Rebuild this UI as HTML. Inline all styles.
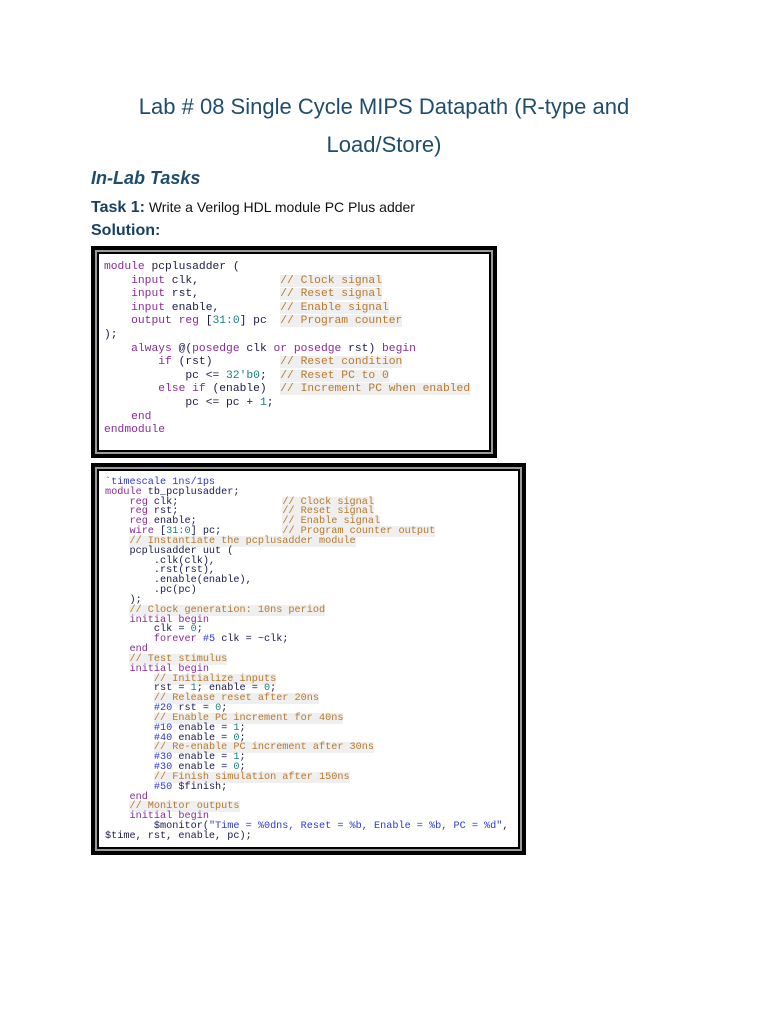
<!DOCTYPE html>
<html><head><meta charset="utf-8"><style>
body{margin:0;width:768px;height:1024px;background:#fff;position:relative;font-family:"Liberation Sans",sans-serif;overflow:hidden}
.t{position:absolute;white-space:nowrap}
.title{left:0;width:768px;text-align:center;font-size:22px;color:#1f4d6b}
.box{position:absolute;background:#000;}
.box .g{position:absolute;left:4px;top:4px;right:4px;bottom:4px;background:#9a9a9a}
.box .i{position:absolute;left:6px;top:6px;right:6px;bottom:6px;background:#000}
.box .w{position:absolute;left:8px;top:8px;right:8px;bottom:8px;background:#fff}
pre{position:absolute;margin:0;font-family:"Liberation Mono",monospace;color:#1a1a50}
.k{color:#8a2a9a}.c{color:#b8792c;background:#efefef}.n{color:#178080}.b{color:#2a3ad0}
</style></head><body>
<div class="t title" style="top:94px">Lab # 08 Single Cycle MIPS Datapath (R-type and</div>
<div class="t title" style="top:132px">Load/Store)</div>
<div class="t" style="left:91px;top:168px;font-size:18px;font-weight:bold;font-style:italic;color:#1f4d6b">In-Lab Tasks</div>
<div class="t" style="left:91px;top:199px;font-size:14px;color:#111"><b style="color:#173f5f;font-size:16px">Task 1:</b> Write a Verilog HDL module PC Plus adder</div>
<div class="t" style="left:91px;top:222px;font-size:16px;font-weight:bold;color:#173f5f">Solution:</div>

<div class="box" style="left:91px;top:246px;width:406px;height:212px"><div class="g"></div><div class="i"></div><div class="w"></div></div>
<pre style="left:104px;top:261px;font-size:11.3px;line-height:13.6px"><span class="k">module</span> pcplusadder (
    <span class="k">input</span> clk,            <span class="c">// Clock signal</span>
    <span class="k">input</span> rst,            <span class="c">// Reset signal</span>
    <span class="k">input</span> enable,         <span class="c">// Enable signal</span>
    <span class="k">output reg</span> [<span class="n">31:0</span>] pc  <span class="c">// Program counter</span>
);
    <span class="k">always</span> @(<span class="k">posedge</span> clk <span class="k">or posedge</span> rst) <span class="k">begin</span>
        <span class="k">if</span> (rst)          <span class="c">// Reset condition</span>
            pc &lt;= <span class="n">32'b0</span>;  <span class="c">// Reset PC to 0</span>
        <span class="k">else if</span> (enable)  <span class="c">// Increment PC when enabled</span>
            pc &lt;= pc + <span class="n">1</span>;
    <span class="k">end</span>
<span class="k">endmodule</span></pre>

<div class="box" style="left:91px;top:463px;width:435px;height:392px"><div class="g"></div><div class="i"></div><div class="w"></div></div>
<pre style="left:105px;top:478px;font-size:10.2px;line-height:9.83px"><span class="b">`timescale 1ns/1ps</span>
<span class="k">module</span> tb_pcplusadder;
    <span class="k">reg</span> clk;                 <span class="c">// Clock signal</span>
    <span class="k">reg</span> rst;                 <span class="c">// Reset signal</span>
    <span class="k">reg</span> enable;              <span class="c">// Enable signal</span>
    <span class="k">wire</span> [<span class="n">31:0</span>] pc;          <span class="c">// Program counter output</span>
    <span class="c">// Instantiate the pcplusadder module</span>
    pcplusadder uut (
        .clk(clk),
        .rst(rst),
        .enable(enable),
        .pc(pc)
    );
    <span class="c">// Clock generation: 10ns period</span>
    <span class="k">initial begin</span>
        clk = <span class="n">0</span>;
        <span class="k">forever</span> <span class="b">#5</span> clk = ~clk;
    <span class="k">end</span>
    <span class="c">// Test stimulus</span>
    <span class="k">initial begin</span>
        <span class="c">// Initialize inputs</span>
        rst = <span class="n">1</span>; enable = <span class="n">0</span>;
        <span class="c">// Release reset after 20ns</span>
        <span class="b">#20</span> rst = <span class="n">0</span>;
        <span class="c">// Enable PC increment for 40ns</span>
        <span class="b">#10</span> enable = <span class="n">1</span>;
        <span class="b">#40</span> enable = <span class="n">0</span>;
        <span class="c">// Re-enable PC increment after 30ns</span>
        <span class="b">#30</span> enable = <span class="n">1</span>;
        <span class="b">#30</span> enable = <span class="n">0</span>;
        <span class="c">// Finish simulation after 150ns</span>
        <span class="b">#50</span> $finish;
    <span class="k">end</span>
    <span class="c">// Monitor outputs</span>
    <span class="k">initial begin</span>
        $monitor(<span class="b">"Time = %0dns, Reset = %b, Enable = %b, PC = %d"</span>,
$time, rst, enable, pc);</pre>
</body></html>
